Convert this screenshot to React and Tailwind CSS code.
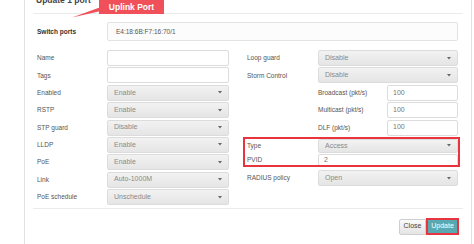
import React from "react";

const Caret = () => (
  <svg width="4" height="3" viewBox="0 0 4 3" className="shrink-0">
    <path d="M0 0h4L2 2.6z" fill="#666" />
  </svg>
);

const Select = ({ value, h = "h-[16px]" }) => (
  <div
    className={`flex items-center justify-between ${h} w-full pl-[6px] pr-[6px] rounded-[2px] border border-[#dcdcdc] bg-linear-to-b from-[#f2f2f2] to-[#e5e5e5] text-[7px] text-[#8a8a8a]`}
  >
    <span>{value}</span>
    <Caret />
  </div>
);

const Input = ({ value = "", h = "h-[16px]" }) => (
  <div
    className={`flex items-center ${h} w-full pl-[5px] rounded-[2px] border border-[#dcdcdc] bg-white text-[7px] text-[#777]`}
  >
    {value}
  </div>
);

const Label = ({ children, w }) => (
  <div className={`${w} shrink-0 text-[6.5px] text-[#555]`}>{children}</div>
);

const leftRows = [
  { label: "Name", input: "" },
  { label: "Tags", input: "" },
  { label: "Enabled", select: "Enable" },
  { label: "RSTP", select: "Enable" },
  { label: "STP guard", select: "Disable" },
  { label: "LLDP", select: "Enable" },
  { label: "PoE", select: "Enable" },
  { label: "Link", select: "Auto-1000M" },
  { label: "PoE schedule", select: "Unschedule" },
];

export default function App() {
  return (
    <div
      className="relative w-[474px] h-[244px] overflow-hidden bg-white"
      style={{ fontFamily: '"Liberation Sans", Arial, sans-serif' }}
    >
      {/* modal */}
      <div className="ml-[24px] w-[448px] h-full border-x border-[#e2e2e2] px-[8px]">
        {/* header */}
        <div className="h-[13px] overflow-hidden border-b border-[#ebebeb] box-content">
          <p className="-mt-[5px] pl-[3px] text-[8.5px] leading-[10px] font-bold text-[#444]">
            Update 1 port
          </p>
        </div>

        {/* switch ports */}
        <div className="mt-[8px] flex items-center h-[19px] pr-[5px]">
          <div className="w-[74px] pl-[4px] shrink-0 text-[6.5px] font-bold text-[#333]">
            Switch ports
          </div>
          <div className="flex items-center h-full flex-1 pl-[8px] rounded-[2px] border border-[#e3e3e3] bg-[#fcfcfc] text-[6.5px] text-[#555]">
            E4:18:6B:F7:16:70/1
          </div>
        </div>

        {/* form grid */}
        <div className="mt-[9px] pl-[4px] pr-[5px] grid grid-cols-[192px_211px] gap-x-[18px] h-[155px]">
          <div className="flex flex-col gap-[1.4px]">
            {leftRows.map((r) => (
              <div key={r.label} className="flex items-center">
                <Label w="w-[70px]">{r.label}</Label>
                <div className="w-[122px]">
                  {r.select ? <Select value={r.select} /> : <Input value={r.input} />}
                </div>
              </div>
            ))}
          </div>

          <div className="flex flex-col gap-[1.4px]">
            <div className="flex items-center">
              <Label w="w-[71px]">Loop guard</Label>
              <div className="w-[140px]">
                <Select value="Disable" />
              </div>
            </div>
            <div className="flex items-center">
              <Label w="w-[71px]">Storm Control</Label>
              <div className="w-[140px]">
                <Select value="Disable" />
              </div>
            </div>
            {["Broadcast (pkt/s)", "Multicast (pkt/s)", "DLF (pkt/s)"].map((l) => (
              <div key={l} className="flex items-center">
                <div className="w-[71px] shrink-0" />
                <Label w="w-[69px]">{l}</Label>
                <div className="w-[71px]">
                  <Input value="100" />
                </div>
              </div>
            ))}

            {/* highlighted VLAN block */}
            <div className="-ml-[4px] -mr-[2px] h-[30px] border-2 border-[#e8343f] pl-[2px] flex flex-col gap-[1px] overflow-hidden">
              <div className="flex items-center">
                <Label w="w-[71px]">Type</Label>
                <div className="w-[140px]">
                  <Select value="Access" h="h-[14px]" />
                </div>
              </div>
              <div className="flex items-center">
                <Label w="w-[71px]">PVID</Label>
                <div className="w-[140px]">
                  <Input value="2" h="h-[12px]" />
                </div>
              </div>
            </div>

            <div className="mt-[2px] flex items-center">
              <Label w="w-[71px]">RADIUS policy</Label>
              <div className="w-[140px]">
                <Select value="Open" />
              </div>
            </div>
          </div>
        </div>

        {/* footer */}
        <div className="mt-[3px] border-t border-[#ebebeb] pt-[9px] pr-[4px] flex justify-end items-center">
          <button className="h-[16px] w-[27px] rounded-l-[2px] border border-[#cfcfcf] bg-linear-to-b from-[#fafafa] to-[#e4e4e4] text-[7px] text-[#444]">
            Close
          </button>
          <button className="h-[17px] w-[33px] border-2 border-[#e8343f] bg-[#58a9b1] text-[7px] text-white">
            Update
          </button>
        </div>
      </div>

      {/* callout */}
      <svg className="absolute left-0 top-0" width="110" height="24" viewBox="0 0 110 24">
        <polygon points="72,17.5 101,7 101,11" fill="#f0505a" />
      </svg>
      <div className="absolute left-[99px] top-0 w-[65px] h-[14px] bg-[#f0505a] flex items-center justify-center text-[8.5px] font-bold text-white">
        Uplink Port
      </div>
    </div>
  );
}
